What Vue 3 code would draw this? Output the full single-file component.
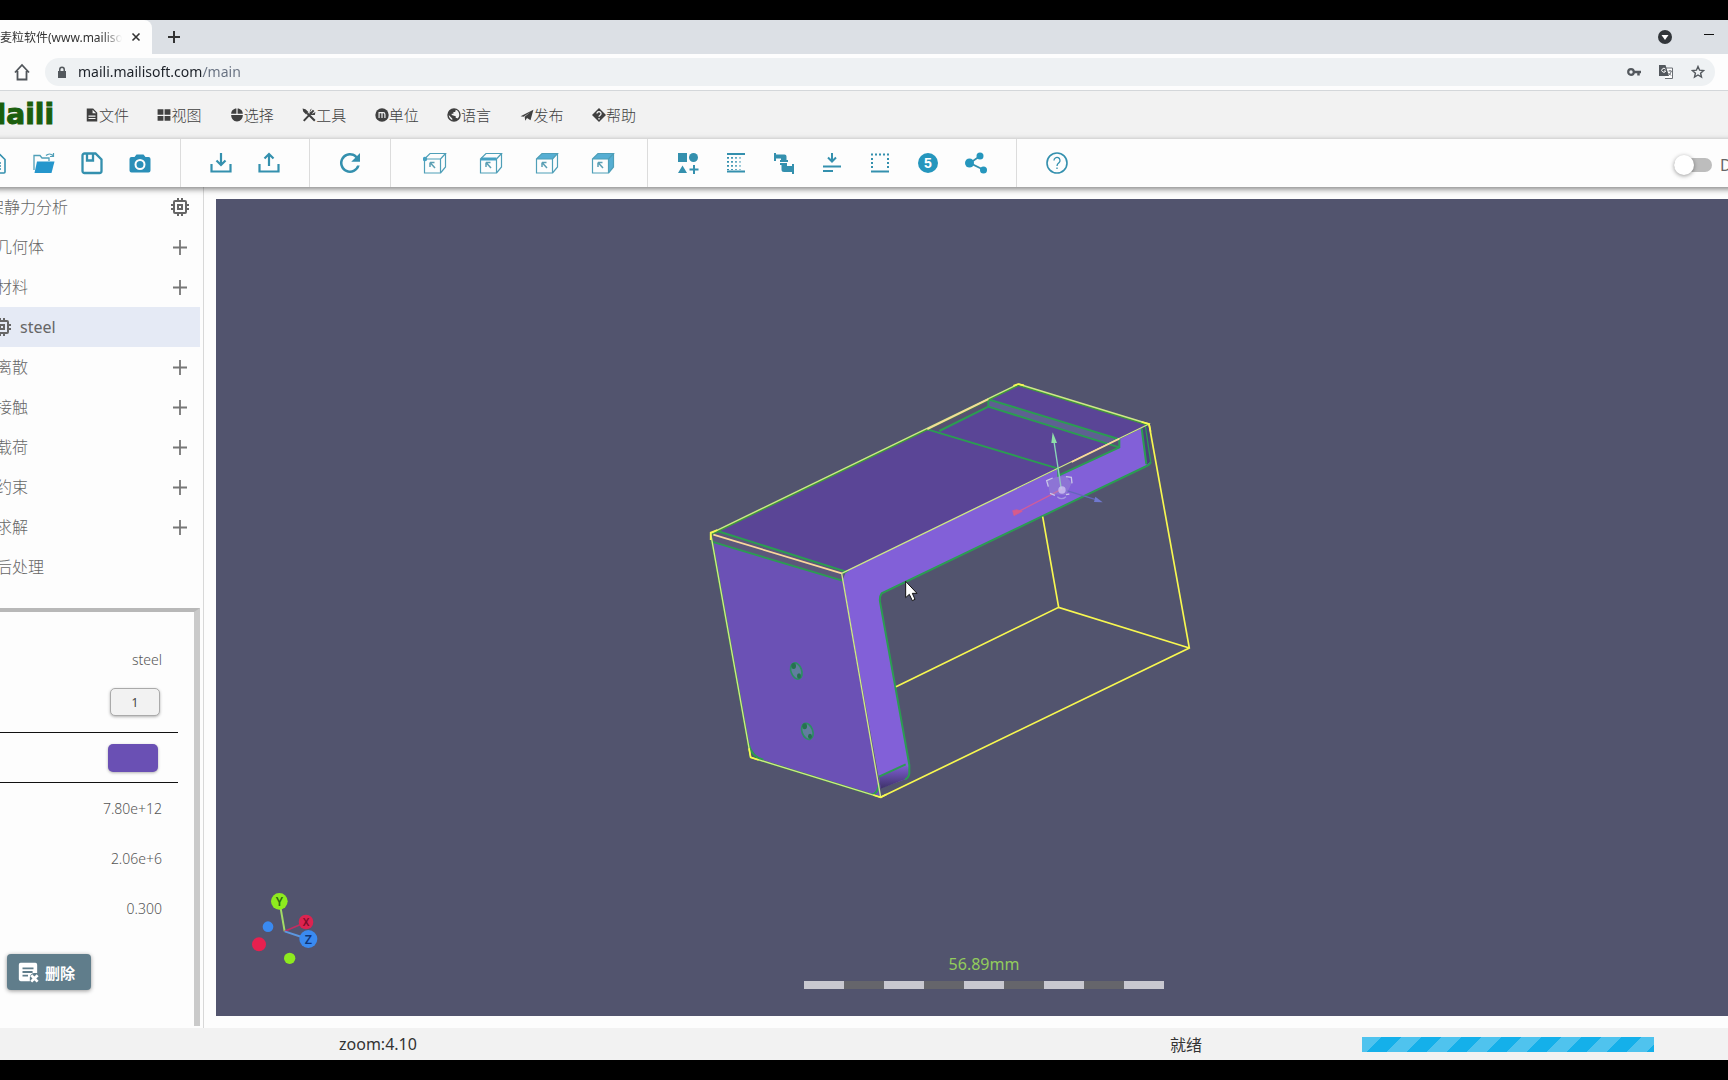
<script setup>
import { ref } from 'vue'

const address = ref('maili.mailisoft.com/main')
const dark = ref(false)

const cube = (extra) =>
  `${extra}<g fill="none" stroke="#4f9fb8" stroke-width="1.2"><path d="M1.500 8H17.500V22H1.500ZM1.500 8L7 2.500H22.500L17.500 8M22.500 2.500V16L17.500 22"/></g><path d="M7 11.500H11.500M7 11.500V16M7 11.500L12 17" stroke="#5b9fb4" stroke-width="1.500" fill="none"/>`

const icons = {
  page: '<path d="M4 3.500h12l5 5V21a1 1 0 0 1-1 1H5a1 1 0 0 1-1-1zM9 12h8M9 15h8M9 18h8" fill="none" stroke="currentColor" stroke-width="1.600"/>',
  open: '<path d="M2 19V4.500h6l2 2.500h7v3" fill="none" stroke="#4f9fb8" stroke-width="1.300"/><path d="M5 10.500h17.500l-3 11.500H2.500z" fill="#2596cc"/><path d="M14 4.500c2-2 5-2 7 0M21.500 2v3.500H18" fill="none" stroke="#4f9fb8" stroke-width="1.200"/>',
  save: '<path d="M4.500 2.500h11l6 6V20a2 2 0 0 1-2 2h-15a2 2 0 0 1-2-2V4.500a2 2 0 0 1 2-2zM7 3v6.500h6V3" fill="none" stroke="currentColor" stroke-width="2.300"/>',
  camera: '<path fill-rule="evenodd" d="M8.500 3.500h7l2 2.500H20.500a2 2 0 0 1 2 2v11.500a2 2 0 0 1-2 2h-17a2 2 0 0 1-2-2V8a2 2 0 0 1 2-2h3zM12 8a5.500 5.500 0 1 0 0 11 5.500 5.500 0 0 0 0-11zM12 10a3.500 3.500 0 1 1 0 7 3.500 3.500 0 0 1 0-7z" fill="#2b8fb8"/>',
  down: '<path d="M2.500 13v7.500h19V13M12 2v12M7.500 9.500L12 14l4.500-4.500" fill="none" stroke="currentColor" stroke-width="2.200"/>',
  up: '<path d="M2.500 13v7.500h19V13M12 15V3M7.500 7.500L12 3l4.500 4.500" fill="none" stroke="currentColor" stroke-width="2.200"/>',
  refresh: '<path transform="translate(-3 -3) scale(1.250)" d="M17.650 6.350A8 8 0 1 0 19.730 14h-2.080A6 6 0 1 1 12 6c1.660 0 3.140.690 4.220 1.780L13 11h7V4z" fill="currentColor"/>',
  cubeVertex: cube('<circle cx="2" cy="8" r="2.200" fill="#3fa3cc"/>'),
  cubeEdge: cube('<path d="M2 8H17.500" stroke="#3fa3cc" stroke-width="3"/>'),
  cubeFace: cube('<path d="M1.500 8L7 2.500H22.500L17.500 8z" fill="#56aed3"/>'),
  cubeBody: cube('<path d="M1.500 8L7 2.500H22.500V16L17.500 22V8z" fill="#56aed3"/>'),
  shapes: '<path d="M2 2h9v9H2zM6.500 14.500l4.500 7.500H2zM17 14h2v3.500h3.500v2H19V23h-2v-3.500h-3.500v-2H17z" fill="currentColor"/><circle cx="17.500" cy="6.500" r="4.500" fill="currentColor"/>',
  mesh: '<path d="M3 3h18M3 20.500h18" stroke="currentColor" stroke-width="2"/><g stroke="currentColor" stroke-dasharray="1.800 2.200"><path d="M4 6v13" stroke-width="2"/><path d="M8 6v13" stroke-width="1.800"/><path d="M12 6v13" stroke-width="1.500"/><path d="M16 6v13" stroke-width="1"/></g>',
  pipe: '<path d="M2 2h2v1.500h8.500a2 2 0 0 1 2 2V9H16v2H8V9h1V7.500H4V10H2zM8 12h7v3h5v-2h2v10h-2v-2h-8a2.500 2.500 0 0 1-2.500-2.500V14H8z" fill="currentColor"/>',
  settle: '<path d="M12 2v8M8 6.500l4 4 4-4M3 15.500h18M3 20h10" fill="none" stroke="currentColor" stroke-width="2"/>',
  select: '<path d="M3 20.500h18" stroke="currentColor" stroke-width="2"/><path d="M3 3.500h18M4 7v12M20 7v12" fill="none" stroke="currentColor" stroke-width="2" stroke-dasharray="2 2"/>',
  five: '<circle cx="12" cy="12" r="10" fill="#2596bd"/><text x="12" y="17" text-anchor="middle" font-family="Liberation Sans, sans-serif" font-size="14" font-weight="700" fill="#fff">5</text>',
  share: '<path d="M16 5L6 12l14 7" fill="none" stroke="currentColor" stroke-width="1.800"/><g fill="#2596bd"><circle cx="16" cy="5" r="3.500"/><circle cx="5.500" cy="12" r="4.500"/><circle cx="19.500" cy="19" r="3.500"/></g>',
  help: '<circle cx="12" cy="12" r="10" fill="none" stroke="currentColor" stroke-width="1.600"/><path d="M9 9.500a3 3 0 1 1 5 2.200c-1.200 1-2 1.600-2 3.300M12 16.500v1.500" fill="none" stroke="currentColor" stroke-width="1.300"/>',
  mFile: '<path fill-rule="evenodd" d="M3 1h11l7 7v15H3zM13 3v6h6zM6 13v2h12v-2zM6 17v2h12v-2z" fill="currentColor"/>',
  mView: '<path d="M1 2h10v9.500H1zM13 2h10v9.500H13zM1 13.500h10V22H1zM13 13.500h10V22H13z" fill="currentColor"/>',
  mSelect: '<path d="M11 1v9H2c0-5 4-9 9-9zM13 1c5 0 9 4 9 9h-9zM2 12h20c0 6-4 11-10 11S2 18 2 12z" fill="currentColor"/>',
  mTool: '<path d="M3 22L20 4M9 9l13 13" stroke="currentColor" stroke-width="3.500"/><path d="M1 1l5 1 5 5-4 4-5-5zM17 1l-3 5 4 4 5-3-1 5-6 0-3-4 1-5z" fill="currentColor"/>',
  mUnit: '<circle cx="12" cy="12" r="11.500" fill="currentColor"/><path d="M7 17V8h7a3 3 0 0 1 3 3v6M12 8v9" fill="none" stroke="#f2f2f2" stroke-width="2"/>',
  mGlobe: '<path fill-rule="evenodd" d="M12 .500a11.500 11.500 0 1 0 0 23 11.500 11.500 0 0 0 0-23zM10 21c-4-1-7-5-7-9l6 6v2zM18 18c-1-1-2-1-3-1v-3l-7-2v-2h3V7h3l1-4c4 1 6 5 6 9 0 2-1 5-3 6z" fill="currentColor"/>',
  mSend: '<path d="M1 14L23 3l-5 18-6-4-3 5-1-7L18 7 6 15z" fill="currentColor"/>',
  mHelp: '<path d="M12 0l12 12-12 12L0 12z" fill="currentColor"/><path d="M8.500 9.500a3.500 3.500 0 1 1 5.500 3c-1.500 1-2 1.500-2 2.500M12 17v2.500" fill="none" stroke="#f2f2f2" stroke-width="2.200"/>',
  chip: '<path fill-rule="evenodd" d="M9 9h6v6H9zM11 11v2h2v-2zM21 11V9h-2V7a2 2 0 0 0-2-2h-2V3h-2v2h-2V3H9v2H7a2 2 0 0 0-2 2v2H3v2h2v2H3v2h2v2a2 2 0 0 0 2 2h2v2h2v-2h2v2h2v-2h2a2 2 0 0 0 2-2v-2h2v-2h-2v-2zM17 17H7V7h10z" fill="currentColor"/>',
  plus: '<path d="M12 5v15M5 12.500h14" stroke="#777" stroke-width="1.800"/>',
  remove: '<path fill-rule="evenodd" d="M4 2h16a2 2 0 0 1 2 2v9h-3a5 5 0 0 0-5 5v4H4a2 2 0 0 1-2-2V4a2 2 0 0 1 2-2zM6 7v2h12V7zM6 11v2h11v-2zM6 15v2h6v-2z" fill="currentColor"/><path d="M15.500 15.500l7 7M22.500 15.500l-7 7" stroke="currentColor" stroke-width="3"/>'
}

const menus = [
  ['文件', 'mFile'], ['视图', 'mView'], ['选择', 'mSelect'], ['工具', 'mTool'],
  ['单位', 'mUnit'], ['语言', 'mGlobe'], ['发布', 'mSend'], ['帮助', 'mHelp']
]

const groups = [
  { id: 'file', tools: ['page', 'open', 'save', 'camera'] },
  { id: 'transfer', tools: ['down', 'up'] },
  { id: 'reload', tools: ['refresh'] },
  { id: 'pick', wide: true, tools: ['cubeVertex', 'cubeEdge', 'cubeFace', 'cubeBody'] },
  { id: 'edit', tools: ['shapes', 'mesh', 'pipe', 'settle', 'select', 'five', 'share'] },
  { id: 'help', tools: ['help'] }
]

const tree = [
  { name: '架静力分析', level: 'root', action: 'chip' },
  { name: '几何体', level: 'branch', action: 'plus' },
  { name: '材料', level: 'branch', action: 'plus' },
  { name: 'steel', level: 'leaf' },
  { name: '离散', level: 'branch', action: 'plus' },
  { name: '接触', level: 'branch', action: 'plus' },
  { name: '载荷', level: 'branch', action: 'plus' },
  { name: '约束', level: 'branch', action: 'plus' },
  { name: '求解', level: 'branch', action: 'plus' },
  { name: '后处理', level: 'branch' }
]

const values = [
  ['密度', '7.80e+12'],
  ['弹性模量', '2.06e+6'],
  ['泊松比', '0.300']
]
</script>

<template>
  <div class="screen">
    <div class="tabstrip">
      <div class="tab">
        <span class="tab-title">麦粒软件(www.mailisoft</span>
        <button class="bare" aria-label="close tab">
          <svg width="10" height="10" viewBox="0 0 10 10"><path d="M1.500 1.500l7 7M8.500 1.500l-7 7" stroke="#333" stroke-width="1.600" /></svg>
        </button>
      </div>
      <button class="bare newtab" aria-label="new tab">
        <svg width="14" height="14" viewBox="0 0 14 14"><path d="M7 1v12M1 7h12" stroke="#333" stroke-width="2" /></svg>
      </button>
      <div class="window-tools">
        <button class="bare" aria-label="tab list">
          <svg width="14" height="14" viewBox="0 0 14 14"><circle cx="7" cy="7" r="7" fill="#32363a" /><path d="M3.500 5h7L7 10z" fill="#fff" /></svg>
        </button>
        <button class="bare minimise" aria-label="minimise">
          <svg width="10" height="14" viewBox="0 0 10 14"><path d="M0 4.500h10" stroke="#111" /></svg>
        </button>
      </div>
    </div>
    <div class="addressbar">
      <button class="bare home" aria-label="home">
        <svg width="16" height="18" viewBox="0 0 16 18"><path d="M3.500 8v8.500h9V8M1 9.500L8 2l7 7.500" fill="none" stroke="#50555a" stroke-width="1.800" /></svg>
      </button>
      <div class="pill">
        <svg width="10" height="12" viewBox="0 0 10 12"><path fill-rule="evenodd" d="M1 5h1V3.500a3 3 0 0 1 6 0V5h1v7H1zM3.500 5h3V3.500a1.500 1.500 0 0 0-3 0z" fill="#53585d" /></svg>
        <input v-model="address" class="address" type="text" aria-label="address">
        <div class="pill-tools">
          <button class="bare" aria-label="passwords">
            <svg width="14" height="10" viewBox="0 0 14 10"><circle cx="4" cy="5" r="2.800" fill="none" stroke="#53585d" stroke-width="2.200" /><path d="M7 5h7M11.500 5v3.500" stroke="#53585d" stroke-width="2.500" /></svg>
          </button>
          <button class="bare" aria-label="translate">
            <svg width="14" height="14" viewBox="0 0 14 14"><path d="M7 3h6.500v10.500H6" fill="#fff" stroke="#6a6f74" /><path d="M0 0h6.500L10 11H0z" fill="#53585d" /><path d="M6.500 4.200a2 2 0 1 0 .200 1.800H5" fill="none" stroke="#fff" /><path d="M9.500 6h3M11 5v1M12.500 6l-2 4M9.500 8l2.500 2.500" stroke="#6a6f74" fill="none" /></svg>
          </button>
          <button class="bare" aria-label="bookmark">
            <svg width="14" height="14" viewBox="0 0 14 14"><path d="M7 1.500l1.600 3.700 4 .400-3 2.600.900 3.900L7 10l-3.500 2.100.900-3.900-3-2.600 4-.400z" fill="none" stroke="#53585d" stroke-width="1.400" /></svg>
          </button>
        </div>
      </div>
    </div>

    <div class="app">
      <header class="menubar">
        <a class="logo" href="#">Maili</a>
        <nav class="menus">
          <button v-for="[label, icon] in menus" :key="label" class="menu">
            <svg width="14" height="14" viewBox="0 0 24 24" v-html="icons[icon]" />{{ label }}
          </button>
        </nav>
      </header>

      <div class="toolbar">
        <div v-for="g in groups" :key="g.id" class="group" :class="{ wide: g.wide }">
          <button v-for="t in g.tools" :key="t" class="tool" :aria-label="t">
            <svg width="24" height="24" viewBox="0 0 24 24" v-html="icons[t]" />
          </button>
        </div>
        <label class="switch">
          <input v-model="dark" type="checkbox">
          <span class="track"></span>
          <span>D</span>
        </label>
      </div>

      <div class="work">
        <aside class="side">
          <ul class="tree">
            <li v-for="n in tree" :key="n.name" class="node" :class="n.level">
              <svg v-if="n.level === 'leaf'" width="24" height="24" viewBox="0 0 24 24" v-html="icons.chip" />
              <span>{{ n.name }}</span>
              <button v-if="n.action" class="bare add" :aria-label="n.name">
                <svg width="24" height="24" viewBox="0 0 24 24" v-html="icons[n.action]" />
              </button>
            </li>
          </ul>
          <section class="props">
            <div class="prop"><input class="value" type="text" value="steel" aria-label="名称"></div>
            <div class="prop ruled"><button class="index">1</button></div>
            <div class="prop ruled"><button class="swatch" aria-label="颜色"></button></div>
            <div v-for="[label, v] in values" :key="label" class="prop">
              <input class="value" type="text" :value="v" :aria-label="label">
            </div>
            <button class="delete">
              <svg width="22" height="22" viewBox="0 0 24 24" v-html="icons.remove" />删除
            </button>
          </section>
        </aside>

        <main class="viewport">
          <svg class="scene" viewBox="0 0 1536 817" preserveAspectRatio="xMidYMid slice">
            <defs>
              <linearGradient id="foot" x1="0" y1="0" x2="0" y2="1">
                <stop offset="0" stop-color="#8260d8" />
                <stop offset="1" stop-color="#3d3268" />
              </linearGradient>
            </defs>
            <svg x="464" y="161" width="520" height="450" viewBox="0 0 1560 1350">
              <path d="M92 520L1015 72L1407 192L485 640Z" fill="#5a4596" />
              <path d="M95 540L487 660L602 1312L575 1304L235 1196L205 1155Z" fill="#6b51b5" />
              <path d="M485 640L1135 326V347L1318 262V238L1385 205L1412 305Q1412 312 1400 318L605 700Q598 710 600 725L688 1215V1240Q686 1254 675 1258L602 1285Z" fill="#8260d8" />
              <path d="M597 1250L677 1213L688 1228Q688 1254 675 1258L602 1286Z" fill="url(#foot)" />
              <path d="M92 520L112 513L498 635L487 662L95 545Z" fill="#5c577b" />
              <path d="M742 208L925 118V140L778 213Z" fill="#565170" />
              <path d="M925 118L1318 238V262L925 140Z" fill="#5e6192" />
              <path d="M1135 326L1312 238L1318 260L1135 347Z" fill="#565373" />
              <path d="M1385 205L1407 195L1412 305L1400 315Z" fill="#49417a" />
              <g fill="none" stroke="#2b9c52" stroke-width="6">
                <path d="M112 513L498 635L487 640M95 545L487 662" />
                <path d="M742 208L1135 326V347L1318 262V238L925 118V140L778 213M925 140L1318 262" />
                <path d="M1385 205L1399 312M1412 305Q1412 312 1400 318L605 700Q598 710 600 725L688 1215V1240Q686 1254 675 1258" />
                <path d="M1396 198L1412 305" stroke-width="4" />
                <path d="M597 1250L677 1213M205 1150Q215 1192 250 1199M575 1304Q595 1300 597 1270" />
                <path d="M92 523L1015 75L1407 195" stroke="#3f9a38" stroke-width="7" />
                <path d="M92 522L212 1192L602 1312" stroke="#3f9a38" />
              </g>
              <g fill="none" stroke="#f8f850" stroke-width="5">
                <path d="M1407 192L1528 864L602 1312M1528 864L1136 742L648 980M1136 742L1088 470" />
                <path d="M1015 72L1407 192L485 640L602 1312L212 1192L92 520L1015 72" stroke="#cfe888" stroke-width="4" />
                <path d="M92 540V518L112 510M1000 77L1015 72L1032 76M1385 186L1407 192L1412 215M207 1165L212 1192L236 1200M580 1305L602 1312L620 1303" />
                <path d="M742 208L925 118M1175 306L1318 236M100 524L485 640" stroke="#fbd79b" />
              </g>
              <g stroke="#2b8f62" stroke-width="5">
                <ellipse cx="349" cy="933" rx="16" ry="25" fill="#617d9f" transform="rotate(-20 349 933)" />
                <ellipse cx="382" cy="1114" rx="16" ry="25" fill="#617d9f" transform="rotate(-20 382 1114)" />
              </g>
              <g fill="#25724f">
                <ellipse cx="341" cy="918" rx="7" ry="9" />
                <ellipse cx="357" cy="948" rx="6" ry="8" />
                <ellipse cx="374" cy="1099" rx="7" ry="9" />
                <ellipse cx="390" cy="1129" rx="6" ry="8" />
              </g>
              <path d="M1144 388L1122 245" stroke="#8bd8b8" stroke-width="4" />
              <path d="M1118 217L1131 249H1114Z" fill="#8ee0a8" />
              <path d="M1144 388L1015 455" stroke="#cf5c9c" stroke-width="4" />
              <path d="M998 452L1010 449L1027 454L1002 467Z" fill="#d75b8c" stroke="#d75b8c" stroke-width="2" />
              <path d="M1160 392L1245 418" stroke="#6366ba" stroke-width="4" />
              <path d="M1246 410L1268 427L1242 426Z" fill="#7078d0" />
              <path d="M1102 362L1130 350L1158 348L1175 370L1158 405L1110 402Z" fill="#a29bd0" opacity=".35" />
              <path d="M1105 380L1100 362L1118 354M1158 350L1174 352L1176 370M1110 400L1125 406M1158 404L1168 402" fill="none" stroke="#c8c6e6" stroke-width="4" />
              <circle cx="1146" cy="390" r="11" fill="#cfc3f2" opacity=".8" />
              <path d="M1132 410Q1144 422 1158 410" fill="none" stroke="#a698e0" stroke-width="4" />
              <path d="M677 664V713L688 703L697 722L705 718L697 700H711Z" fill="#fff" stroke="#111" stroke-width="3" />
            </svg>
          </svg>

          <svg class="axes" width="84" height="80" viewBox="18 60 252 240">
            <path d="M164 184L152 115" stroke="#a3dc66" stroke-width="6" />
            <path d="M164 184L215 162" stroke="#c02e62" stroke-width="5" />
            <path d="M164 184L215 201" stroke="#5c97e0" stroke-width="6" />
            <circle cx="148" cy="94" r="25" fill="#8eea1f" />
            <circle cx="228" cy="156" r="22" fill="#dc2350" />
            <circle cx="235" cy="207" r="27" fill="#3a8af0" />
            <circle cx="114" cy="170" r="16" fill="#3a8af0" />
            <circle cx="87" cy="223" r="21" fill="#e8204f" />
            <circle cx="179" cy="265" r="17" fill="#8eea1f" />
            <g font-family="Noto Sans, sans-serif" text-anchor="middle" font-weight="600">
              <text x="148" y="107" font-size="36" fill="#2c6a10">Y</text>
              <text x="228" y="167" font-size="31" fill="#7a0c28">X</text>
              <text x="235" y="221" font-size="38" fill="#0f3578">Z</text>
            </g>
          </svg>

          <div class="scale">
            <span>56.89mm</span>
            <div class="ruler"><i v-for="n in 9" :key="n"></i></div>
          </div>
        </main>
      </div>

      <footer class="status">
        <span class="zoom">zoom:4.10</span>
        <span class="ready">就绪</span>
        <div class="progress" role="progressbar" aria-label="progress"></div>
      </footer>
    </div>
  </div>
</template>

<style>
body {
  background: #000;
}
</style>

<style scoped>
.screen {
  box-sizing: border-box;
  display: flex;
  flex-direction: column;
  min-height: 100vh;
  padding: 20px 0;
  overflow: hidden;
  font-family: "Noto Sans", "Noto Sans CJK SC", sans-serif;
  font-size: 16px;
  color: #666;
}

button,
input {
  font: inherit;
  color: inherit;
}

button {
  cursor: pointer;
}

svg {
  display: block;
  flex: none;
}

.bare {
  display: flex;
  padding: 0;
  border: 0;
  background: none;
}

.tabstrip {
  display: flex;
  align-items: center;
  height: 34px;
  background: #dce0e5;
}

.tab {
  box-sizing: border-box;
  display: flex;
  align-items: center;
  justify-content: space-between;
  width: 152px;
  height: 34px;
  padding-right: 11px;
  border-radius: 0 8px 0 0;
  background: #fdfdfd;
  font-size: 12px;
}

.tab-title {
  width: 122px;
  overflow: hidden;
  white-space: nowrap;
  color: #333;
  mask-image: linear-gradient(90deg, #000 84%, transparent);
}

.newtab {
  margin-left: 15px;
}

.window-tools {
  display: flex;
  gap: 32px;
  margin-left: auto;
  padding-right: 14px;
}

.addressbar {
  box-sizing: border-box;
  display: flex;
  align-items: center;
  height: 36px;
  padding: 0 13px 0 14px;
  background: #fdfdfd;
}

.pill {
  box-sizing: border-box;
  display: flex;
  flex: 1;
  align-items: center;
  height: 28px;
  margin-left: 15px;
  padding: 0 10px 0 12px;
  border-radius: 14px;
  background: #eef1f3;
}

.address {
  flex: 1;
  margin: 0 0 0 11px;
  padding: 0 0 2px;
  border: 0;
  outline: 0;
  background: linear-gradient(90deg, #1c2128 125px, #667080 125px);
  background-clip: text;
  color: transparent;
  font-size: 14px;
}

.pill-tools {
  display: flex;
  align-items: center;
  gap: 18px;
}

.app {
  display: flex;
  flex: 1;
  flex-direction: column;
  margin: 0 -24px 0 -40px;
  background: #fdfdfd;
}

.menubar {
  box-sizing: border-box;
  display: flex;
  align-items: center;
  height: 49px;
  border-top: 1px solid #d4d7da;
  background: #f2f2f2;
}

.logo {
  display: flex;
  justify-content: flex-end;
  width: 94px;
  text-decoration: none;
  font-family: "DejaVu Sans", sans-serif;
  font-size: 28px;
  font-weight: 700;
  line-height: 32px;
  color: #1b5e0d;
  -webkit-text-stroke: 1px #1b5e0d;
}

.menus {
  display: flex;
  justify-content: space-between;
  width: 551px;
  margin-left: 31px;
}

.menu {
  display: flex;
  align-items: center;
  padding: 0;
  border: 0;
  background: none;
  font-size: 15px;
  font-weight: 300;
  line-height: 20px;
  color: #404040;
}

.toolbar {
  position: relative;
  z-index: 1;
  display: flex;
  height: 48px;
  padding-right: 24px;
  background: #fdfdfd;
  box-shadow: 0 2px 6px rgba(0, 0, 0, 0.5);
  color: #3490ae;
}

.group {
  display: flex;
  align-items: center;
  padding: 0 16px;
  border-right: 1px solid #dcdcdc;
}

.group:first-child {
  padding-left: 12px;
}

.group:nth-last-child(2) {
  border-right: 0;
}

.tool {
  display: flex;
  justify-content: center;
  width: 48px;
  padding: 0;
  border: 0;
  background: none;
}

.wide .tool {
  width: 56px;
}

.switch {
  position: relative;
  display: flex;
  align-items: center;
  gap: 8px;
  width: 54px;
  margin-left: auto;
  padding-top: 4px;
  color: #666;
  white-space: nowrap;
}

.switch input {
  position: absolute;
  opacity: 0;
}

.track {
  position: relative;
  flex: none;
  width: 38px;
  height: 14px;
  border-radius: 7px;
  background: #bdbdbd;
}

.track::after {
  content: "";
  position: absolute;
  left: 0;
  top: -3px;
  width: 20px;
  height: 20px;
  border-radius: 50%;
  background: #fff;
  box-shadow: 0 1px 4px rgba(0, 0, 0, 0.4);
}

.switch input:checked + .track::after {
  left: 18px;
}

.work {
  display: flex;
  flex: 1;
}

.side {
  box-sizing: border-box;
  display: flex;
  flex-direction: column;
  width: 244px;
  padding-right: 3px;
  border-right: 1px solid #d8d8d8;
}

.tree {
  margin: 0;
  padding: 0 0 21px;
  list-style: none;
}

.node {
  display: flex;
  align-items: center;
  height: 40px;
  padding-right: 8px;
  font-weight: 300;
  line-height: 22px;
}

.root {
  padding-left: 28px;
}

.branch {
  padding-left: 36px;
}

.leaf {
  gap: 6px;
  padding-left: 30px;
  background: #e5eaf5;
  font-weight: 400;
}

.add {
  margin-left: auto;
}

.props {
  display: flex;
  flex: 1;
  flex-direction: column;
  align-items: flex-start;
  margin-bottom: 2px;
  padding-top: 22px;
  border-top: 4px solid #b8b8b8;
  border-right: 6px solid #cacaca;
}

.prop {
  box-sizing: border-box;
  display: flex;
  align-items: center;
  justify-content: flex-end;
  width: 218px;
  height: 50px;
  padding-right: 16px;
}

.prop.ruled {
  height: 49px;
  padding: 0 18px 12px 0;
  border-bottom: 1px solid #111;
}

.ruled + .prop.ruled {
  height: 50px;
  padding: 0 20px 0 0;
}

.value {
  width: 120px;
  padding: 0;
  border: 0;
  outline: 0;
  background: none;
  text-align: right;
  font-size: 14px;
  font-weight: 300;
  color: #555;
}

.index,
.swatch {
  width: 50px;
  height: 28px;
  padding: 0;
  border: 1px solid #aaa;
  border-radius: 5px;
  background: #f2f2f2;
  box-shadow: 0 1px 3px rgba(0, 0, 0, 0.3);
  font-size: 12px;
  color: #444;
}

.swatch {
  border: 0;
  background: #6a50b4;
}

.delete {
  display: flex;
  align-items: center;
  gap: 6px;
  height: 36px;
  margin: 21px 0 0 47px;
  padding: 0 16px 0 10px;
  border: 0;
  border-radius: 4px;
  background: #607d8b;
  box-shadow: 0 1px 4px rgba(0, 0, 0, 0.4);
  font-size: 15px;
  font-weight: 700;
  color: #fff;
}

.viewport {
  position: relative;
  flex: 1;
  margin: 12px 0 12px 12px;
  background: #52546e;
}

.scene {
  position: absolute;
  inset: 0;
  width: 100%;
  height: 100%;
}

.axes {
  position: absolute;
  left: 20px;
  bottom: 46px;
}

.scale {
  position: absolute;
  left: 0;
  right: 0;
  bottom: 27px;
  display: flex;
  flex-direction: column;
  align-items: center;
  gap: 5px;
  line-height: 24px;
  color: #93cc5c;
}

.ruler {
  display: flex;
}

.ruler i {
  width: 40px;
  height: 8px;
  background: #c8c8d0;
}

.ruler i:nth-child(even) {
  background: #65656b;
}

.status {
  box-sizing: border-box;
  display: flex;
  align-items: center;
  height: 32px;
  padding: 0 98px 0 379px;
  background: #f2f2f2;
  color: #333;
}

.zoom {
  flex: 1;
}

.ready {
  width: 192px;
}

.progress {
  width: 292px;
  height: 15px;
  background: linear-gradient(135deg, #4fc3ee 25%, #14b0ea 25% 50%, #4fc3ee 50% 75%, #14b0ea 75%) 0 0 / 40px 40px;
}
</style>
